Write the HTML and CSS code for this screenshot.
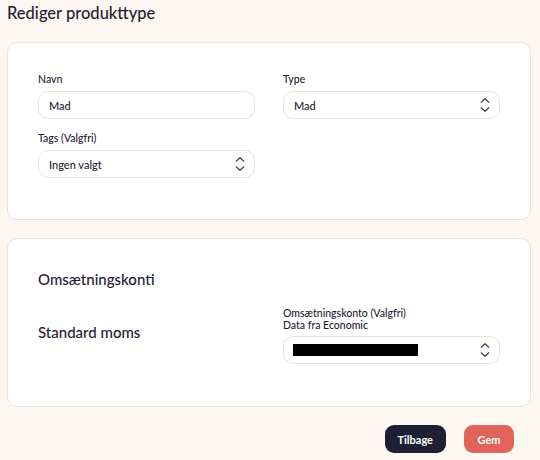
FILE: index.html
```html
<!DOCTYPE html>
<html lang="da">
<head>
<meta charset="utf-8">
<title>Rediger produkttype</title>
<link rel="stylesheet" href="styles.css">
</head>
<body>
<div class="page">
  <h1 class="title">Rediger produkttype</h1>

  <section class="card card1">
    <div class="grid">
      <div class="col">
        <div class="field">
          <label class="label">Navn</label>
          <div class="input">Mad</div>
        </div>
        <div class="field">
          <label class="label">Tags (Valgfri)</label>
          <div class="input select">
            <span>Ingen valgt</span>
            <svg class="chev" width="10" height="16" viewBox="0 0 10 16"><path d="M1.2 5.2 L5 1.8 L8.8 5.2 M1.2 10.8 L5 14.2 L8.8 10.8" fill="none" stroke="#3c3d4c" stroke-width="1.2" stroke-linecap="round" stroke-linejoin="round"/></svg>
          </div>
        </div>
      </div>
      <div class="col">
        <div class="field">
          <label class="label">Type</label>
          <div class="input select">
            <span>Mad</span>
            <svg class="chev" width="10" height="16" viewBox="0 0 10 16"><path d="M1.2 5.2 L5 1.8 L8.8 5.2 M1.2 10.8 L5 14.2 L8.8 10.8" fill="none" stroke="#3c3d4c" stroke-width="1.2" stroke-linecap="round" stroke-linejoin="round"/></svg>
          </div>
        </div>
      </div>
    </div>
  </section>

  <section class="card card2">
    <h2 class="section-title">Omsætningskonti</h2>
    <div class="grid row">
      <div class="row-title">Standard moms</div>
      <div class="field">
        <label class="label two">Omsætningskonto (Valgfri)<br>Data fra Economic</label>
        <div class="input select">
          <span class="redacted"></span>
          <svg class="chev" width="10" height="16" viewBox="0 0 10 16"><path d="M1.2 5.2 L5 1.8 L8.8 5.2 M1.2 10.8 L5 14.2 L8.8 10.8" fill="none" stroke="#3c3d4c" stroke-width="1.2" stroke-linecap="round" stroke-linejoin="round"/></svg>
        </div>
      </div>
    </div>
  </section>

  <div class="actions">
    <button class="btn btn-dark">Tilbage</button>
    <button class="btn btn-red">Gem</button>
  </div>
</div>
</body>
</html>
```

FILE: styles.css
```css
html, body {
  margin: 0;
  padding: 0;
  background: #fcf7f1;
}
body {
  font-family: Lato, "Noto Sans", "Liberation Sans", sans-serif;
  color: #1f2033;
}
.page {
  padding: 2px 9px 0 7px;
}
.title {
  margin: 0;
  font-size: 16.5px;
  font-weight: 500;
  line-height: 22px;
  height: 40px;
}
.card {
  background: #ffffff;
  border: 1px solid #efe2d5;
  border-radius: 10px;
  padding: 28px 30px 30px 30px;
}
.card1 {
  padding-top: 29px;
  padding-bottom: 29px;
}
.card2 {
  margin-top: 18px;
}
.grid {
  display: grid;
  grid-template-columns: 1fr 1fr;
  column-gap: 28px;
}
.field {
  display: flex;
  flex-direction: column;
  margin-bottom: 12px;
}
.label {
  font-size: 10.5px;
  line-height: 14px;
  margin-bottom: 5px;
  font-weight: 500;
}
.label.two {
  line-height: 12px;
}
.input {
  height: 28px;
  box-sizing: border-box;
  border: 1px solid #efe2d5;
  border-radius: 10px;
  padding: 0 9px 0 10px;
  font-size: 11px;
  font-weight: 500;
  display: flex;
  align-items: center;
  justify-content: space-between;
}
.chev {
  flex: none;
}
.redacted {
  display: block;
  width: 125px;
  height: 12px;
  background: #000;
  margin-left: -1px;
}
.section-title {
  margin: 0 0 16px 0;
  font-size: 15px;
  font-weight: 500;
  line-height: 24px;
}
.row {
  align-items: center;
}
.row-title {
  font-size: 15px;
  font-weight: 500;
  line-height: 20px;
  margin-bottom: 20px;
}
.actions {
  display: flex;
  justify-content: flex-end;
  gap: 18px;
  margin-top: 18px;
  padding-right: 17px;
}
.btn {
  height: 28px;
  border: none;
  border-radius: 9px;
  font-family: Lato, "Noto Sans", "Liberation Sans", sans-serif;
  font-size: 11px;
  font-weight: 700;
  color: #fff;
  padding: 0 13px;
  cursor: pointer;
}
.btn-dark {
  background: #1e1f35;
  min-width: 61px;
}
.btn-red {
  background: #e0645a;
  min-width: 50px;
}
```
